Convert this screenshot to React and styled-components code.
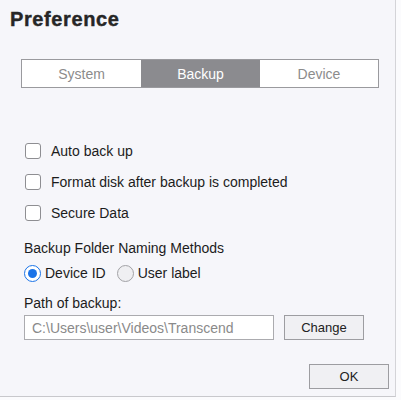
import React from "react";
import styled, { createGlobalStyle } from "styled-components";

const Global = createGlobalStyle`
  html, body { margin: 0; padding: 0; background: #fbfbfd; }
  body { font-family: "Liberation Sans", Arial, sans-serif; }
`;

const Dialog = styled.div`
  width: 396px;
  height: 397px;
  box-sizing: border-box;
  background: #f6f6fa;
  border-right: 1px solid #d4d4d8;
  border-bottom: 1px solid #c8c8cc;
  display: flex;
  flex-direction: column;
  color: #1c1c1c;
  font-size: 14px;
`;

const Title = styled.h1`
  margin: 0;
  padding: 8px 0 0 10px;
  font-size: 20px;
  line-height: 23px;
  font-weight: bold;
  color: #262626;
  letter-spacing: 0.6px;
  -webkit-text-stroke: 0.4px #262626;
`;

const Tabs = styled.div`
  margin: 28px 0 0 21px;
  width: 358px;
  height: 29px;
  box-sizing: border-box;
  border: 1px solid #9a9a9e;
  display: grid;
  grid-template-columns: 119px 119px 1fr;
  background: #fff;
`;

const Tab = styled.div`
  display: flex;
  align-items: center;
  justify-content: center;
  font-size: 14px;
  color: ${(p) => (p.$active ? "#ffffff" : "#8c8c8c")};
  background: ${(p) => (p.$active ? "#8b8b8f" : "#ffffff")};
`;

const Body = styled.div`
  display: flex;
  flex-direction: column;
  padding-left: 24px;
`;

const Checks = styled.div`
  margin-top: 47px;
  display: flex;
  flex-direction: column;
`;

const CheckRow = styled.label`
  height: 31px;
  display: flex;
  align-items: center;
  padding-left: 1px;
`;

const Box = styled.span`
  width: 16px;
  height: 16px;
  box-sizing: border-box;
  border: 1px solid #8e8e92;
  border-radius: 3px;
  background: #fff;
  margin-right: 10px;
`;

const Heading = styled.div`
  margin-top: 10px;
  line-height: 20px;
`;

const Radios = styled.div`
  margin-top: 5px;
  height: 20px;
  display: flex;
  align-items: center;
`;

const RadioItem = styled.label`
  display: flex;
  align-items: center;
  margin-right: 11px;
`;

const Circle = styled.span`
  width: 17px;
  height: 17px;
  box-sizing: border-box;
  border-radius: 50%;
  margin-right: 4px;
  border: 1px solid ${(p) => (p.$on ? "#1a73e8" : "#a2a2a6")};
  background: ${(p) => (p.$on ? "#fff" : "#efeff2")};
  display: flex;
  align-items: center;
  justify-content: center;
  &::after {
    content: "";
    width: 9px;
    height: 9px;
    border-radius: 50%;
    background: ${(p) => (p.$on ? "#1a73e8" : "transparent")};
  }
`;

const PathLabel = styled.div`
  margin-top: 10px;
  line-height: 20px;
`;

const PathRow = styled.div`
  margin-top: 2px;
  display: flex;
  align-items: center;
`;

const Input = styled.div`
  width: 250px;
  height: 25px;
  box-sizing: border-box;
  border: 1px solid #ababaf;
  background: #fff;
  color: #8a8a8a;
  padding-left: 7px;
  display: flex;
  align-items: center;
`;

const Button = styled.button`
  width: 80px;
  height: 25px;
  box-sizing: border-box;
  border: 1px solid #9d9da1;
  background: #f0f0f3;
  font-family: "Liberation Sans", Arial, sans-serif;
  font-size: 13px;
  color: #222;
  padding: 0;
  margin-left: ${(p) => p.$ml || 0}px;
`;

const Footer = styled.div`
  margin-top: 24px;
  padding-right: 6px;
  display: flex;
  justify-content: flex-end;
`;

export default function App() {
  return (
    <>
      <Global />
      <Dialog>
        <Title>Preference</Title>
        <Tabs>
          <Tab>System</Tab>
          <Tab $active>Backup</Tab>
          <Tab>Device</Tab>
        </Tabs>
        <Body>
          <Checks>
            <CheckRow><Box />Auto back up</CheckRow>
            <CheckRow><Box />Format disk after backup is completed</CheckRow>
            <CheckRow><Box />Secure Data</CheckRow>
          </Checks>
          <Heading>Backup Folder Naming Methods</Heading>
          <Radios>
            <RadioItem><Circle $on />Device ID</RadioItem>
            <RadioItem><Circle />User label</RadioItem>
          </Radios>
          <PathLabel>Path of backup:</PathLabel>
          <PathRow>
            <Input>C:\Users\user\Videos\Transcend</Input>
            <Button $ml={10}>Change</Button>
          </PathRow>
        </Body>
        <Footer>
          <Button>OK</Button>
        </Footer>
      </Dialog>
    </>
  );
}
